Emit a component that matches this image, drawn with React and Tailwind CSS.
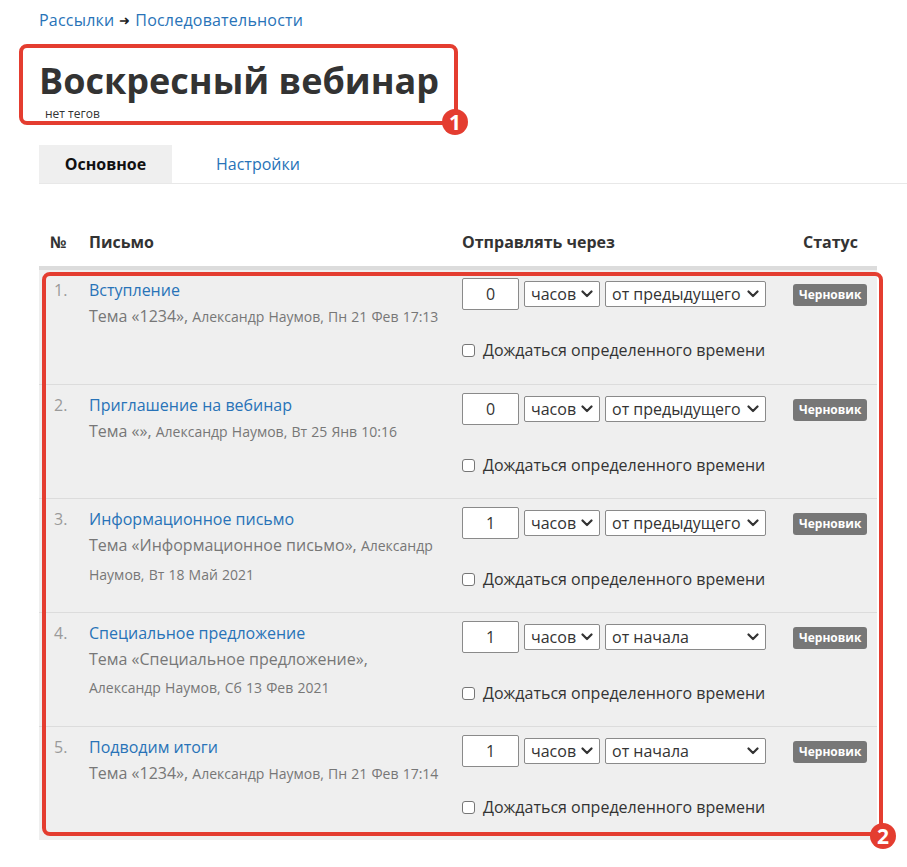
import React from 'react'

const rows = [
  { n: '1.', title: 'Вступление', theme: 'Тема «1234»,', rest: 'Александр Наумов, Пн 21 Фев 17:13', value: '0', from: 'от предыдущего' },
  { n: '2.', title: 'Приглашение на вебинар', theme: 'Тема «»,', rest: 'Александр Наумов, Вт 25 Янв 10:16', value: '0', from: 'от предыдущего' },
  { n: '3.', title: 'Информационное письмо', theme: 'Тема «Информационное письмо»,', rest: 'Александр Наумов, Вт 18 Май 2021', value: '1', from: 'от предыдущего' },
  { n: '4.', title: 'Специальное предложение', theme: 'Тема «Специальное предложение»,', rest: 'Александр Наумов, Сб 13 Фев 2021', value: '1', from: 'от начала' },
  { n: '5.', title: 'Подводим итоги', theme: 'Тема «1234»,', rest: 'Александр Наумов, Пн 21 Фев 17:14', value: '1', from: 'от начала' },
]

function Chevron() {
  return (
    <svg width="12" height="8" viewBox="0 0 12 8" className="shrink-0">
      <path d="M1.5 1.5 L6 6 L10.5 1.5" fill="none" stroke="#333" strokeWidth="2.2" strokeLinecap="round" strokeLinejoin="round" />
    </svg>
  )
}

function FakeSelect({ label, className }) {
  return (
    <div className={`h-[26px] flex items-center justify-between gap-1 pl-[6px] pr-[6px] border border-[#8a8a8a] rounded-[2px] bg-white text-[16px] text-[#333] ${className}`}>
      <span className="leading-none">{label}</span>
      <Chevron />
    </div>
  )
}

function Marker({ num, className }) {
  return (
    <div className={`absolute w-[26px] h-[26px] rounded-full bg-[#e43d30] flex items-center justify-center text-white text-[21px] font-bold leading-none ${className}`}>
      {num}
    </div>
  )
}

function Row({ r, first }) {
  const words = r.rest.split(' ')
  return (
    <div className={`flex h-[114px] ${first ? 'h-[111px]' : 'border-t border-[#dcdcdc]'}`}>
      <div className="w-[50px] pl-[15px] pt-[8px] text-[16px] leading-6 text-[#9a9a9a]">{r.n}</div>
      <div className="w-[373px] pr-[20px] pt-[8px]">
        <div className="text-[16px] leading-6 text-[#2873b8]">{r.title}</div>
        <div className="leading-[28px] text-[#777]">
          <span className="text-[16px]">{r.theme}</span>{' '}
          {words.map((w, i) => (
            <React.Fragment key={i}>
              <span className="text-[14px]">{w}</span>
              {i < words.length - 1 ? ' ' : null}
            </React.Fragment>
          ))}
        </div>
      </div>
      <div className="w-[328px] pt-[8px]">
        <div className="flex items-center gap-[5px]">
          <div className="w-[57px] h-[32px] border border-[#8a8a8a] rounded-[2px] bg-white flex items-center justify-center text-[16px] text-[#333]">{r.value}</div>
          <FakeSelect label="часов" className="w-[76px]" />
          <FakeSelect label={r.from} className="w-[161px]" />
        </div>
        <label className="flex items-center mt-[28px] text-[16px] leading-6 text-[#333]">
          <span className="w-[13px] h-[13px] border border-[#767676] rounded-[3px] bg-white mr-[8px]"></span>
          Дождаться определенного времени
        </label>
      </div>
      <div className="flex-1 pt-[11px] pl-[3px]">
        <span className="inline-block bg-[#777] text-white text-[12px] font-bold leading-[22px] px-[6px] rounded-[3px]">Черновик</span>
      </div>
    </div>
  )
}

export default function App() {
  return (
    <div className="min-h-[867px] bg-white pl-[39px] pt-[9px] text-[#333]" style={{ fontFamily: '"Open Sans", "Liberation Sans", sans-serif' }}>
      <div className="text-[16px] leading-[22px] flex items-center">
        <span className="text-[#2873b8] tracking-[0.2px]">Рассылки</span>
        <span className="mx-[5px] text-[13px] text-[#222]">➜</span>
        <span className="text-[#2873b8] tracking-[0.2px]">Последовательности</span>
      </div>

      <div className="relative mt-[28px] w-[400px]">
        <h1 className="text-[36px] font-bold leading-[44px] text-[#333] whitespace-nowrap">Воскресный вебинар</h1>
        <div className="pl-[6px] mt-[3px] text-[12px] leading-4">нет тегов</div>
        <div className="absolute left-[-20px] top-[-15px] w-[439px] h-[81px] border-[4px] border-[#e43d30] rounded-[8px]"></div>
        <Marker num="1" className="left-[403px] top-[50px]" />
      </div>

      <div className="flex mt-[23px] border-b border-[#e8e8e8] h-[39px]">
        <div className="w-[133px] bg-[#efefef] flex items-center justify-center text-[16px] font-bold text-[#111]">Основное</div>
        <div className="ml-[44px] flex items-center text-[16px] text-[#2873b8]">Настройки</div>
      </div>

      <div className="relative mr-[30px] mt-[39px]">
        <div className="flex h-[47px] items-start pt-[7px] text-[16px] font-bold text-[#333] border-b-[4px] border-[#dcdcdc]">
          <div className="w-[50px] pl-[11px]">№</div>
          <div className="w-[373px]">Письмо</div>
          <div className="w-[328px]">Отправлять через</div>
          <div className="flex-1 pl-[13px]">Статус</div>
        </div>
        <div className="bg-[#efefef]">
          {rows.map((r, i) => (
            <Row key={i} r={r} first={i === 0} />
          ))}
        </div>
        <div className="absolute left-[3px] top-[49px] right-[-6px] h-[564px] border-[4px] border-[#e43d30] rounded-[8px]"></div>
        <Marker num="2" className="right-[-19px] top-[600px]" />
      </div>
    </div>
  )
}
